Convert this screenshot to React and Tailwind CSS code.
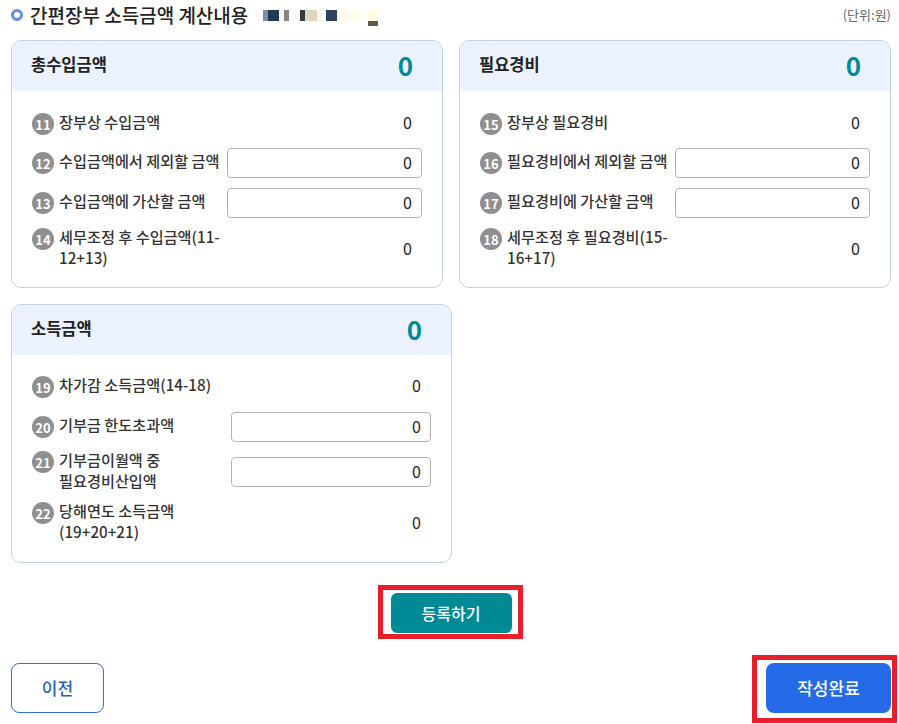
const FONT = "font-['Noto_Sans_CJK_KR','Noto_Sans',sans-serif]";

function Badge({ n }) {
  return (
    <span className="flex h-[22px] w-[22px] shrink-0 items-center justify-center rounded-full bg-[#8f8f8f] text-[13px] font-bold leading-none text-white">
      {n}
    </span>
  );
}

function Row({ n, label, value, input, labelWidth = 'w-[195px]', className = 'items-center' }) {
  return (
    <div className={`flex ${className}`}>
      <div className={`flex shrink-0 items-start gap-[5px] pr-[4px] ${labelWidth}`}>
        <Badge n={n} />
        <span className="-mt-[2px] pb-[2px] text-[15.2px] font-medium leading-[21px] text-[#333]">{label}</span>
      </div>
      {input ? (
        <div className="flex h-[30px] flex-1 items-center justify-end rounded-[4px] border border-[#b4b4b4] bg-white pb-[2px] pr-[9px] text-[16px] text-[#222]">
          {value}
        </div>
      ) : (
        <div className="flex-1 -translate-y-px pr-[10px] text-right text-[16px] leading-[21px] text-[#222]">{value}</div>
      )}
    </div>
  );
}

function Card({ title, total, className = '', bodyClass = '', children }) {
  return (
    <div className={`overflow-hidden rounded-[10px] border border-[#c3d3e6] bg-white ${className}`}>
      <div className="flex h-[50px] items-center justify-between bg-[#ebf2fe] pl-[19px] pr-[29px]">
        <span className="-mt-[3px] text-[16.5px] font-bold text-[#222]">{title}</span>
        <span className="-mt-[4px] text-[26px] font-bold text-[#008a96]">{total}</span>
      </div>
      <div className={`flex flex-col pl-[20px] pr-[20px] ${bodyClass}`}>{children}</div>
    </div>
  );
}

export default function App() {
  return (
    <div className={`relative h-[724px] w-[899px] overflow-hidden bg-white pl-[11px] pr-[8px] ${FONT}`}>
      {/* heading */}
      <div className="flex h-[40px] items-start justify-between pt-[1px]">
        <div className="flex items-center">
          <span className="h-[12px] w-[12px] rounded-full border-[3px] border-[#5b8ee6]" />
          <h1 className="ml-[7px] text-[19px] font-medium leading-[28px] text-[#222]">간편장부 소득금액 계산내용</h1>
          {/* blurred name */}
          <svg width="116" height="18" viewBox="0 0 116 18" className="ml-[15px] mt-[3px]">
            <rect x="0" y="2" width="5" height="11" fill="#7f8daa" />
            <rect x="5" y="2" width="11" height="11" fill="#233a52" />
            <rect x="16" y="2" width="5" height="11" fill="#fbf6ee" />
            <rect x="21" y="2" width="5" height="11" fill="#87838a" />
            <rect x="37" y="2" width="5" height="11" fill="#333a40" />
            <rect x="42" y="2" width="12" height="11" fill="#ddd5c0" />
            <rect x="54" y="2" width="4" height="11" fill="#fff8e3" />
            <rect x="63" y="2" width="11" height="11" fill="#2f4060" />
            <rect x="79" y="2" width="5" height="11" fill="#fff9e8" />
            <rect x="84" y="2" width="16" height="11" fill="#fbfff0" />
            <rect x="105" y="2" width="10" height="11" fill="#fffde0" />
            <rect x="105" y="13" width="10" height="5" fill="#665a48" />
          </svg>
        </div>
        <span className="mt-[4px] text-[13px] text-[#666]">(단위:원)</span>
      </div>

      {/* income / expense */}
      <div className="flex gap-[16px]">
        <Card title="총수입금액" total="0" className="w-[432px]" bodyClass="gap-[10px] pb-[17px] pt-[22px]">
          <Row n="11" label="장부상 수입금액" value="0" className="h-[25px] items-start" />
          <Row n="12" label="수입금액에서 제외할 금액" value="0" input />
          <Row n="13" label="수입금액에 가산할 금액" value="0" input />
          <Row n="14" label="세무조정 후 수입금액(11-12+13)" value="0" />
        </Card>
        <Card title="필요경비" total="0" className="w-[432px]" bodyClass="gap-[10px] pb-[17px] pt-[22px]">
          <Row n="15" label="장부상 필요경비" value="0" className="h-[25px] items-start" />
          <Row n="16" label="필요경비에서 제외할 금액" value="0" input />
          <Row n="17" label="필요경비에 가산할 금액" value="0" input />
          <Row n="18" label="세무조정 후 필요경비(15-16+17)" value="0" />
        </Card>
      </div>

      {/* net income */}
      <Card title="소득금액" total="0" className="mt-[16px] w-[441px]" bodyClass="gap-[9px] pb-[18px] pt-[21px]">
        <Row n="19" label="차가감 소득금액(14-18)" value="0" labelWidth="w-[199px]" className="h-[27px] items-start" />
        <Row n="20" label="기부금 한도초과액" value="0" input labelWidth="w-[199px]" />
        <Row n="21" label={<>기부금이월액 중<br />필요경비산입액</>} value="0" input labelWidth="w-[199px]" />
        <Row n="22" label={<>당해연도 소득금액<br />(19+20+21)</>} value="0" labelWidth="w-[199px]" />
      </Card>

      {/* register */}
      <div className="mt-[30px] flex justify-center">
        <div className="relative">
          <button className="h-[40px] w-[121px] rounded-[6px] bg-[#008a96] text-[16px] font-medium text-white">등록하기</button>
          <div className="absolute -bottom-[6px] -left-[13px] -right-[11px] -top-[8px] border-[5px] border-[#e71f28]" />
        </div>
      </div>

      {/* footer */}
      <div className="mt-[30px] flex items-start justify-between">
        <button className="h-[50px] w-[93px] rounded-[8px] border border-[#2f6fd6] bg-white text-[17px] font-medium text-[#2563b8]">이전</button>
        <div className="relative">
          <button className="h-[50px] w-[125px] rounded-[8px] bg-[#256ae6] text-[17px] font-medium text-white">작성완료</button>
          <div className="absolute -bottom-[10px] -left-[14px] -right-[6px] -top-[8px] border-[5px] border-[#e71f28]" />
        </div>
      </div>
    </div>
  );
}
